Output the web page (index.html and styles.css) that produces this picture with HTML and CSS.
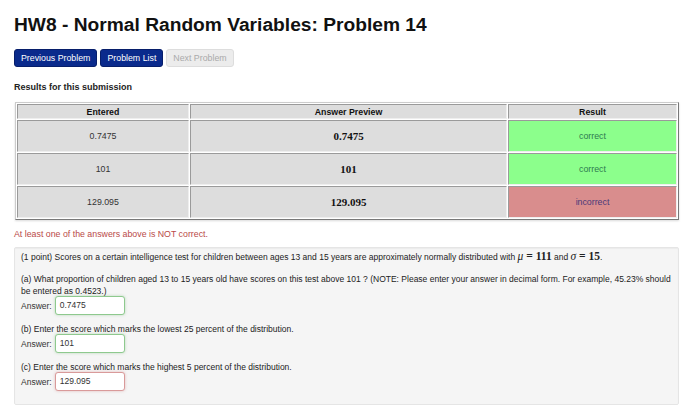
FILE: index.html
```html
<!DOCTYPE html>
<html>
<head>
<meta charset="utf-8">
<link rel="stylesheet" href="styles.css">
</head>
<body>
<div class="page">
  <h1 class="title">HW8 - Normal Random Variables: Problem 14</h1>
  <div class="nav">
    <span class="btn">Previous Problem</span>
    <span class="btn">Problem List</span>
    <span class="btn disabled">Next Problem</span>
  </div>
  <h3 class="subhead">Results for this submission</h3>
  <table class="results">
    <tr>
      <th class="c1">Entered</th>
      <th class="c2">Answer Preview</th>
      <th class="c3">Result</th>
    </tr>
    <tr>
      <td>0.7475</td>
      <td class="math">0.7475</td>
      <td class="ok">correct</td>
    </tr>
    <tr>
      <td>101</td>
      <td class="math">101</td>
      <td class="ok">correct</td>
    </tr>
    <tr>
      <td>129.095</td>
      <td class="math">129.095</td>
      <td class="bad">incorrect</td>
    </tr>
  </table>
  <p class="warn">At least one of the answers above is NOT correct.</p>
  <div class="problem">
    <p class="para">(1 point) Scores on a certain intelligence test for children between ages 13 and 15 years are approximately normally distributed with <span class="mj"><i>μ</i> = 111</span> and <span class="mj"><i>σ</i> = 15</span>.</p>
    <p class="para">(a) What proportion of children aged 13 to 15 years old have scores on this test above 101 ? (NOTE: Please enter your answer in decimal form. For example, 45.23% should be entered as 0.4523.)</p>
    <div class="answer"><span class="lbl">Answer:</span><span class="field good">0.7475</span></div>
    <p class="para">(b) Enter the score which marks the lowest 25 percent of the distribution.</p>
    <div class="answer"><span class="lbl">Answer:</span><span class="field good">101</span></div>
    <p class="para">(c) Enter the score which marks the highest 5 percent of the distribution.</p>
    <div class="answer"><span class="lbl">Answer:</span><span class="field wrong">129.095</span></div>
  </div>
</div>
</body>
</html>
```

FILE: styles.css
```css
html, body {
  margin: 0;
  padding: 0;
  background: #fff;
}
body {
  font-family: "Liberation Sans", Arial, sans-serif;
  font-size: 8.8px;
  color: #222;
}
.page {
  padding: 12px 21px 0 14px;
}
.title {
  margin: 0;
  font-size: 19.2px;
  line-height: 26px;
  font-weight: bold;
  color: #111;
}
.nav {
  display: flex;
  gap: 3px;
  margin-top: 11px;
}
.btn {
  display: inline-block;
  height: 18px;
  line-height: 16px;
  padding: 0 6px;
  background: #0a2a8c;
  color: #fff;
  border: 1px solid #071e6a;
  border-radius: 3px;
  font-size: 8.8px;
  box-sizing: border-box;
}
.btn.disabled {
  background: #ececec;
  color: #aaa;
  border-color: #ddd;
}
.subhead {
  margin: 14px 0 0 0;
  font-size: 9px;
  line-height: 12px;
  font-weight: bold;
  color: #222;
}
.results {
  margin-top: 9px;
  margin-left: 1px;
  width: 664px;
  border-collapse: separate;
  border-spacing: 1px;
  border: 1px outset #ccc;
  box-shadow: 0 1px 2px rgba(0,0,0,0.15);
}
.results th, .results td {
  background: #dddddd;
  border: 1px inset #eee;
  text-align: center;
  padding: 0;
  font-size: 8.8px;
}
.results th {
  height: 13px;
  font-weight: bold;
  color: #111;
}
.results td {
  height: 30px;
  color: #333;
}
.results .c1 { width: 170px; }
.results .c2 { width: 315px; }
.results .math {
  font-family: "Liberation Serif", "Times New Roman", serif;
  font-size: 11px;
  color: #111;
  font-weight: bold;
}
.results .ok {
  background: #8cff8c;
  color: #2e7a50;
}
.results .bad {
  background: #d98d8d;
  color: #4a3a7a;
}
.warn {
  margin: 8px 0 0 0;
  color: #b94a48;
  font-size: 8.8px;
  line-height: 12px;
}
.problem {
  margin-top: 7px;
  width: 665px;
  box-sizing: border-box;
  background: #f5f5f5;
  border: 1px solid #e5e5e5;
  border-radius: 2px;
  padding: 3px 7px 13px 6px;
  box-shadow: inset 0 1px 1px rgba(0,0,0,0.04);
}
.para {
  margin: 0;
  line-height: 12px;
  font-size: 8.5px;
  color: #222;
}
.para + .para {
  margin-top: 10px;
}
.mj {
  font-family: "Liberation Serif", "Times New Roman", serif;
  font-size: 11.5px;
  line-height: 10px;
  font-weight: bold;
}
.mj i {
  font-weight: normal;
}
.answer {
  display: flex;
  align-items: center;
  gap: 3px;
  margin-bottom: 8px;
  margin-top: -1px;
}
.answer:last-child {
  margin-bottom: 0;
}
.lbl {
  font-size: 8.5px;
  color: #333;
}
.field {
  display: inline-block;
  width: 70px;
  height: 19px;
  line-height: 17px;
  box-sizing: border-box;
  padding: 0 4px;
  background: #fff;
  border: 1px solid #8ec98e;
  border-radius: 3px;
  box-shadow: 0 0 3px rgba(70,160,70,0.35);
  font-size: 8.5px;
  color: #333;
}
.field.wrong {
  border-color: #d99a9a;
  box-shadow: 0 0 3px rgba(190,80,80,0.35);
}
```
